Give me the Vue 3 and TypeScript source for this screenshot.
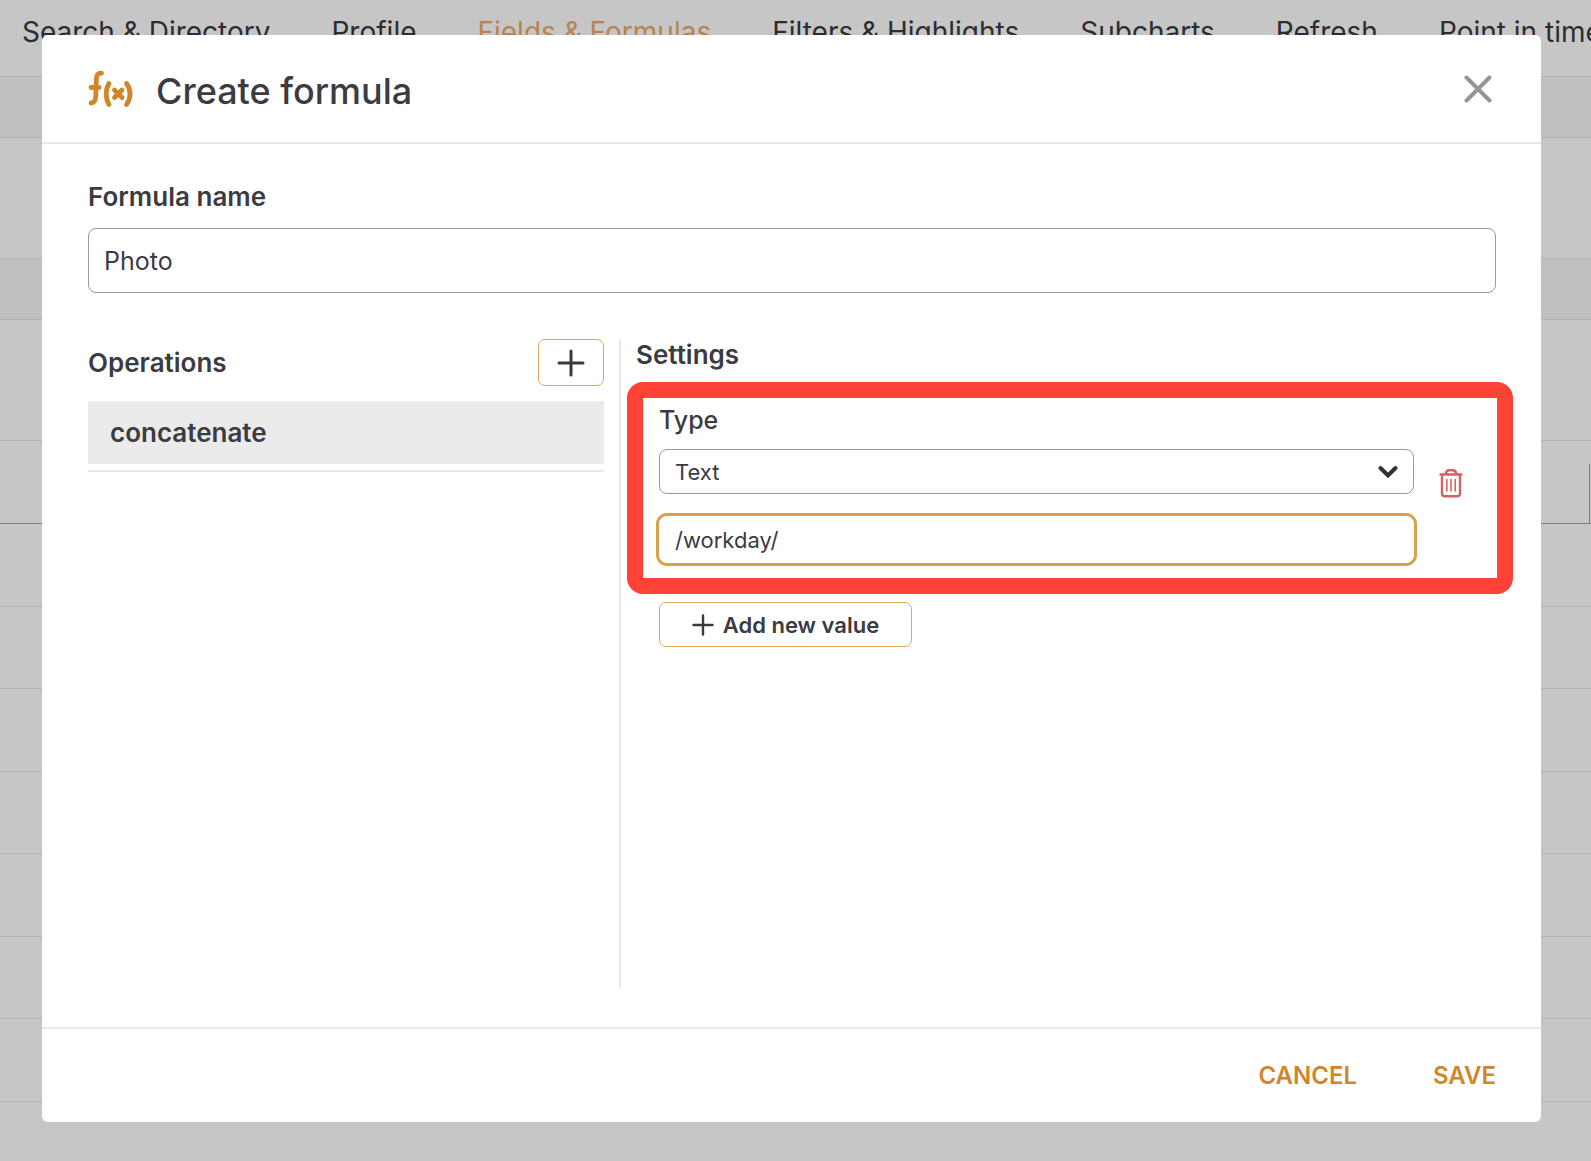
<script setup lang="ts">
import { ref } from 'vue'

interface Tab {
  label: string
  active?: boolean
}

const tabs: Tab[] = [
  { label: 'Search & Directory' },
  { label: 'Profile' },
  { label: 'Fields & Formulas', active: true },
  { label: 'Filters & Highlights' },
  { label: 'Subcharts' },
  { label: 'Refresh' },
  { label: 'Point in time' },
]

const rows: string[] = ['band', 'block', 'band', 'block', 'entry', 'row', 'row', 'row', 'row', 'row', 'row', 'row']

const formulaName = ref('Photo')
const valueType = ref('Text')
const valueText = ref('/workday/')
</script>

<template>
  <div class="page">
    <div class="backdrop">
      <nav class="tabs">
        <a v-for="tab in tabs" :key="tab.label" href="#" class="tab" :class="{ active: tab.active }">{{ tab.label }}</a>
      </nav>
      <div v-for="(row, i) in rows" :key="i" class="strip" :class="row"></div>
    </div>

    <div class="overlay">
      <section class="modal" role="dialog" aria-labelledby="modal-title">
        <header class="modal-header">
          <svg class="fx" width="46" height="38" viewBox="0 0 46 38" fill="none" stroke="#d2862a" stroke-width="4.800" stroke-linecap="round" stroke-linejoin="round" aria-hidden="true">
            <path d="M13.500 3.200C10 2.800 8.600 5 8.400 8.500L7.800 26C7.600 30.500 6 33 3 33M3 17.500H11" />
            <path d="M21 13.500C17.300 19.500 17.300 28.500 21 34.500M38.500 13.500C43.200 19.500 43.200 28.500 38.500 34.500" />
            <path d="M26.500 20L34 27.500M34 20L26.500 27.500" />
          </svg>
          <h1 id="modal-title">Create formula</h1>
          <button type="button" class="icon-btn close" aria-label="Close">
            <svg width="28" height="28" viewBox="0 0 28 28" fill="none" stroke="#969696" stroke-width="4" stroke-linecap="round">
              <path d="M2.500 2.500L25.500 25.500M25.500 2.500L2.500 25.500" />
            </svg>
          </button>
        </header>

        <div class="modal-body">
          <label class="heading" for="formula-name">Formula name</label>
          <input id="formula-name" v-model="formulaName" class="name-input" type="text" />

          <div class="columns">
            <div class="operations">
              <div class="operations-head">
                <h2 class="heading">Operations</h2>
                <button type="button" class="outline-btn add-op" aria-label="Add operation">
                  <svg width="28" height="28" viewBox="0 0 28 28" stroke="#38383e" stroke-width="3" stroke-linecap="round">
                    <path d="M14 2V26M2 14H26" />
                  </svg>
                </button>
              </div>
              <ul class="op-list">
                <li><button type="button" class="op">concatenate</button></li>
              </ul>
            </div>

            <div class="settings">
              <h2 class="heading">Settings</h2>
              <div class="value">
                <div class="fields">
                  <label class="type-label" for="value-type">Type</label>
                  <div class="select-wrap">
                    <select id="value-type" v-model="valueType">
                      <option>Text</option>
                    </select>
                    <svg class="chevron" width="20" height="14" viewBox="0 0 20 14" fill="none" stroke="#303037" stroke-width="4" stroke-linecap="round" aria-hidden="true">
                      <path d="M2.500 3L10 10.500L17.500 3" />
                    </svg>
                  </div>
                  <input v-model="valueText" class="value-input" type="text" aria-label="Value" />
                </div>
                <button type="button" class="icon-btn" aria-label="Delete value">
                  <svg width="24" height="30" viewBox="0 0 24 30" fill="none" stroke="#cf6464" stroke-width="2.400" stroke-linecap="round" stroke-linejoin="round">
                    <path d="M1.500 5.500H22.500M6.500 5C7 2.400 8.200 1.300 10 1.300H14C15.800 1.300 17 2.400 17.500 5M3 6V24.500Q3 27.300 6 27.300H18Q21 27.300 21 24.500V6" />
                    <path d="M7.800 10.500V22M12 10.500V22M16.200 10.500V22" stroke-width="1.600" />
                  </svg>
                </button>
                <div class="highlight"></div>
              </div>
              <button type="button" class="outline-btn add-value">
                <svg width="22" height="22" viewBox="0 0 22 22" stroke="#38383e" stroke-width="2.400" stroke-linecap="round" aria-hidden="true">
                  <path d="M11 1.500V20.500M1.500 11H20.500" />
                </svg>
                <span>Add new value</span>
              </button>
            </div>
          </div>
        </div>

        <footer class="modal-footer">
          <button type="button" class="text-btn">CANCEL</button>
          <button type="button" class="text-btn">SAVE</button>
        </footer>
      </section>
    </div>
  </div>
</template>

<style>
body {
  margin: 0;
}
</style>

<style scoped>
.page,
.page * {
  box-sizing: border-box;
}

.page {
  display: grid;
  grid-template: minmax(100vh, auto) / minmax(0, 1fr);
  overflow: hidden;
  background: #c6c6c6;
  color: #3b3b42;
  font-family: Inter, 'Liberation Sans', sans-serif;
}

.backdrop,
.overlay {
  grid-area: 1 / 1;
}

.backdrop {
  min-width: 0;
}

.tabs {
  display: flex;
  gap: 61px;
  height: 77px;
  padding: 14px 0 0 22px;
  border-bottom: 1px solid #b0b0b0;
}

.tab {
  flex: none;
  color: #2c2c32;
  font-size: 28px;
  line-height: 36px;
  text-decoration: none;
  white-space: nowrap;
}

.tab.active {
  color: #b98350;
}

.strip {
  border-bottom: 1px solid #b3b3b3;
}

.band {
  height: 61px;
  background: #c0c0c0;
}

.block {
  height: 121px;
}

.entry {
  height: 83px;
  border-bottom-color: #808080;
  background: linear-gradient(#808080, #808080) right 1px bottom / 1px 59px no-repeat;
}

.row {
  height: 82px;
}

.row:nth-child(odd) {
  height: 83px;
}

.overlay {
  z-index: 1;
  display: flex;
  padding: 35px 50px 39px 42px;
}

.modal {
  display: flex;
  flex: 1;
  flex-direction: column;
  min-width: 0;
  border-radius: 6px;
  background: #fff;
}

.modal-header {
  display: flex;
  align-items: center;
  height: 109px;
  padding: 0 49px 0 46px;
  border-bottom: 2px solid #e8e8e8;
}

h1,
h2 {
  margin: 0;
}

h1 {
  margin-left: 22px;
  padding-top: 4px;
  font-size: 36px;
  font-weight: 500;
  line-height: 44px;
}

.icon-btn {
  display: flex;
  padding: 0;
  border: 0;
  background: none;
}

.close {
  margin-left: auto;
}

.modal-body {
  display: flex;
  flex: 1;
  flex-direction: column;
  padding: 37px 45px 39px 46px;
}

.heading {
  font-size: 26px;
  font-weight: 600;
  line-height: 32px;
}

input,
select {
  width: 100%;
  margin: 0;
  border: 1px solid #9a9a9a;
  border-radius: 8px;
  background: #fff;
  color: #3b3b42;
  font-family: inherit;
  padding: 0 15px;
}

.name-input {
  height: 65px;
  margin-top: 15px;
  font-size: 25px;
}

.columns {
  display: grid;
  flex: 1;
  grid-template-columns: minmax(0, 533fr) minmax(0, 875fr);
  margin-top: 46px;
}

.operations {
  padding-right: 15px;
  border-right: 2px solid #e8e8e8;
}

.operations-head {
  display: flex;
  align-items: center;
  justify-content: space-between;
}

.outline-btn {
  display: flex;
  align-items: center;
  justify-content: center;
  border: 1px solid #dba962;
  border-radius: 7px;
  background: #fff;
  color: #3b3b42;
  font-family: inherit;
}

.add-op {
  width: 66px;
  height: 47px;
}

.op-list {
  margin: 15px 0 0;
  padding: 0 0 6px;
  border-bottom: 2px solid #e8e8e8;
  list-style: none;
}

.op {
  display: block;
  width: 100%;
  height: 63px;
  padding: 0 22px;
  border: 0;
  background: #ebebeb;
  color: #3b3b42;
  font-family: inherit;
  font-size: 26px;
  font-weight: 600;
  text-align: left;
}

.settings {
  padding-left: 15px;
}

.value {
  position: relative;
  display: flex;
  align-items: center;
  gap: 25px;
  margin-top: 33px;
  padding: 0 33px 0 23px;
}

.highlight {
  position: absolute;
  inset: -22px -17px -31px -9px;
  border: 16px solid #ff4236;
  border-radius: 16px;
  pointer-events: none;
}

.fields {
  flex: 1;
  min-width: 0;
}

.type-label {
  display: block;
  font-size: 25px;
  font-weight: 500;
  line-height: 32px;
}

.select-wrap {
  position: relative;
  display: flex;
  margin-top: 13px;
}

select {
  height: 45px;
  appearance: none;
  font-size: 22px;
}

.chevron {
  position: absolute;
  top: 16px;
  right: 16px;
  pointer-events: none;
}

.value-input {
  display: block;
  height: 47px;
  margin-top: 22px;
  padding: 0 16px;
  border: 0;
  outline: 3px solid #d9a050;
  font-size: 22px;
}

.add-value {
  gap: 9px;
  width: 253px;
  height: 45px;
  margin: 39px 0 0 23px;
  font-size: 22px;
  font-weight: 600;
}

.modal-footer {
  display: flex;
  align-items: center;
  justify-content: flex-end;
  gap: 76px;
  height: 95px;
  padding: 0 45px;
  border-top: 2px solid #e8e8e8;
}

.text-btn {
  padding: 0;
  border: 0;
  background: none;
  color: #d2862a;
  font-family: inherit;
  font-size: 24px;
  font-weight: 600;
  line-height: 32px;
}
</style>
